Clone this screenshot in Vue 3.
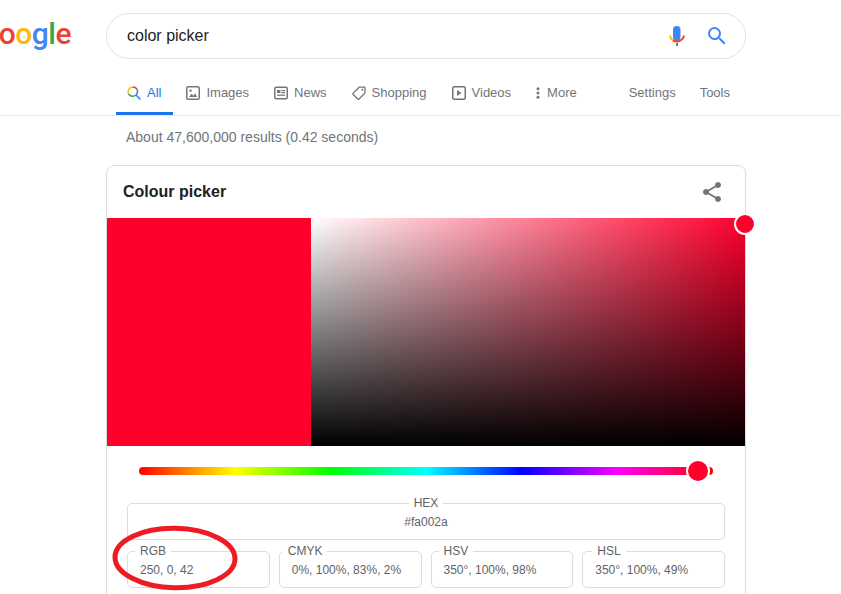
<script setup>
const tabs = [
  { name: 'All', icon: 'all', active: true },
  { name: 'Images', icon: 'images' },
  { name: 'News', icon: 'news' },
  { name: 'Shopping', icon: 'shopping' },
  { name: 'Videos', icon: 'videos' },
  { name: 'More', icon: 'more' }
]
const logo = [
  { c: 'G', color: '#4285f4' },
  { c: 'o', color: '#ea4335' },
  { c: 'o', color: '#fbbc05' },
  { c: 'g', color: '#4285f4' },
  { c: 'l', color: '#34a853' },
  { c: 'e', color: '#ea4335' }
]
const fields = [
  { label: 'RGB', value: '250, 0, 42', offset: 7 },
  { label: 'CMYK', value: '0%, 100%, 83%, 2%', offset: 3 },
  { label: 'HSV', value: '350°, 100%, 98%', offset: 7 },
  { label: 'HSL', value: '350°, 100%, 49%', offset: 9 }
]
</script>

<template>
  <div class="page">
    <header class="top">
      <div class="logo">
        <span class="logo-word">
          <span v-for="(l, i) in logo" :key="i" :style="{ color: l.color }">{{ l.c }}</span>
        </span>
      </div>
      <div class="search">
        <span class="query">color picker</span>
        <svg class="mic" width="16" height="20" viewBox="0 0 16 20">
          <rect x="4" y="0" width="7.5" height="15" rx="3.7" fill="#4285f4" />
          <path d="M1 9.5a7 6.5 0 0 0 3 4.9" fill="none" stroke="#fbbc05" stroke-width="2" />
          <path d="M4 14.4a7 6.5 0 0 0 7.6 0A7 6.5 0 0 0 15 9.5" fill="none" stroke="#ea4335" stroke-width="2" />
          <rect x="7" y="17" width="2" height="3" fill="#34a853" />
        </svg>
        <svg class="lens" width="24" height="24" viewBox="0 0 24 24">
          <path fill="#4285f4" d="M15.5 14h-.79l-.28-.27A6.471 6.471 0 0 0 16 9.5 6.5 6.5 0 1 0 9.5 16c1.61 0 3.09-.59 4.23-1.57l.27.28v.79l5 4.99L20.49 19l-4.99-5zm-6 0C7.01 14 5 11.99 5 9.5S7.01 5 9.5 5 14 7.01 14 9.5 11.99 14 9.5 14z" />
        </svg>
      </div>
    </header>

    <nav class="tabs">
      <a v-for="t in tabs" :key="t.name" class="tab" :class="{ active: t.active }">
        <svg v-if="t.icon === 'all'" width="14" height="14" viewBox="0 0 14 14" fill="none" stroke-width="1.5">
          <path d="M1.6 8A4.9 4.9 0 0 1 5.7 1" stroke="#fbbc05" />
          <path d="M5.7 1A4.9 4.9 0 0 1 10.2 3.6" stroke="#ea4335" />
          <path d="M10.2 3.6A4.9 4.9 0 0 1 9 9" stroke="#4285f4" />
          <path d="M9 9A4.9 4.9 0 0 1 1.6 8" stroke="#34a853" />
          <path d="M9 9l4.4 4.4" stroke="#4285f4" stroke-width="1.7" />
        </svg>
        <svg v-else-if="t.icon === 'images'" width="14" height="14" viewBox="0 0 14 14">
          <rect x="0.75" y="0.75" width="12.5" height="12.5" rx="1.5" fill="none" stroke="#70757a" stroke-width="1.5" />
          <circle cx="4.6" cy="4.6" r="1.2" fill="#70757a" />
          <path d="M3 11l2.6-3.2 1.7 2 2-2.6L11 11z" fill="#70757a" />
        </svg>
        <svg v-else-if="t.icon === 'news'" width="14" height="14" viewBox="0 0 14 14">
          <rect x="0.75" y="1.25" width="12.5" height="11.5" rx="1.5" fill="none" stroke="#70757a" stroke-width="1.5" />
          <rect x="3" y="4" width="3.4" height="3" fill="#70757a" />
          <rect x="7.4" y="4" width="3.6" height="1.2" fill="#70757a" />
          <rect x="7.4" y="6" width="3.6" height="1.2" fill="#70757a" />
          <rect x="3" y="8.6" width="8" height="1.2" fill="#70757a" />
        </svg>
        <svg v-else-if="t.icon === 'shopping'" width="14" height="14" viewBox="0 0 14 14">
          <path d="M1 7.4L7.2 1.2h5.3a.5.5 0 0 1 .5.5V7L6.8 13.2a.6.6 0 0 1-.8 0L1 8.2a.6.6 0 0 1 0-.8z" fill="none" stroke="#70757a" stroke-width="1.3" />
          <circle cx="10.4" cy="3.8" r="1" fill="#70757a" />
        </svg>
        <svg v-else-if="t.icon === 'videos'" width="14" height="14" viewBox="0 0 14 14">
          <rect x="0.75" y="0.75" width="12.5" height="12.5" rx="1.5" fill="none" stroke="#70757a" stroke-width="1.5" />
          <path d="M5 4l4.6 3L5 10z" fill="#70757a" />
        </svg>
        <svg v-else class="dots" width="4" height="12" viewBox="0 0 4 12">
          <circle cx="2" cy="1.8" r="1.5" fill="#70757a" />
          <circle cx="2" cy="6" r="1.5" fill="#70757a" />
          <circle cx="2" cy="10.2" r="1.5" fill="#70757a" />
        </svg>
        <span>{{ t.name }}</span>
      </a>
      <a class="tool settings">Settings</a>
      <a class="tool">Tools</a>
    </nav>

    <p class="stats">About 47,600,000 results (0.42 seconds)</p>

    <section class="card">
      <div class="card-head">
        <h2>Colour picker</h2>
        <svg width="24" height="24" viewBox="0 0 24 24">
          <path fill="#70757a" d="M18 16.08c-.76 0-1.44.3-1.96.77L8.91 12.7c.05-.23.09-.46.09-.7s-.04-.47-.09-.7l7.05-4.11c.54.5 1.25.81 2.04.81 1.66 0 3-1.34 3-3s-1.34-3-3-3-3 1.34-3 3c0 .24.04.47.09.7L8.04 9.81C7.5 9.31 6.79 9 6 9c-1.66 0-3 1.34-3 3s1.34 3 3 3c.79 0 1.5-.31 2.04-.81l7.12 4.16c-.05.21-.08.43-.08.65 0 1.61 1.31 2.92 2.92 2.92 1.61 0 2.92-1.31 2.92-2.92s-1.31-2.92-2.92-2.92z" />
        </svg>
      </div>

      <div class="picker">
        <div class="swatch"></div>
        <div class="sat">
          <span class="sat-thumb"></span>
        </div>
      </div>

      <div class="hue">
        <span class="hue-thumb"></span>
      </div>

      <div class="fields">
        <fieldset class="box hex">
          <legend>HEX</legend>
          <div>#fa002a</div>
        </fieldset>
        <div class="row">
          <fieldset v-for="f in fields" :key="f.label" class="box">
            <legend :style="{ marginLeft: f.offset + 'px' }">{{ f.label }}</legend>
            <div class="val">{{ f.value }}</div>
          </fieldset>
        </div>
      </div>

      <svg class="scribble" width="130" height="70" viewBox="0 0 130 70">
        <ellipse cx="65" cy="35" rx="60" ry="29.7" fill="none" stroke="#ed1c24" stroke-width="5" transform="rotate(1 65 35)" />
      </svg>
    </section>
  </div>
</template>

<style scoped>
.page {
  height: 594px;
  overflow: hidden;
  font-family: "Liberation Sans", Arial, sans-serif;
  color: #70757a;
}
.top {
  display: flex;
  align-items: center;
  padding-top: 13px;
}
.logo {
  width: 71px;
  margin-right: 35px;
  padding-bottom: 5px;
  display: flex;
  justify-content: flex-end;
}
.logo-word {
  font-family: Roboto, sans-serif;
  font-size: 30px;
  font-weight: 500;
  letter-spacing: -0.5px;
  line-height: 41px;
  white-space: nowrap;
}
.search {
  width: 640px;
  height: 46px;
  box-sizing: border-box;
  border: 1px solid #dfe1e5;
  border-radius: 23px;
  display: flex;
  align-items: center;
  padding: 0 8px 0 20px;
}
.query {
  flex: 1;
  font-size: 16px;
  color: #222;
}
.mic {
  margin-right: 20px;
}
.lens {
  margin-right: 8px;
}
.tabs {
  display: flex;
  height: 56px;
  padding: 0 111px 0 116px;
  border-bottom: 1px solid #ebebeb;
}
.tab {
  display: flex;
  align-items: center;
  gap: 6px;
  padding: 14px 12px 0 11px;
  margin-right: 2px;
  font-size: 13px;
  box-sizing: border-box;
  height: 56px;
  border-bottom: 3px solid transparent;
}
.tab.active {
  color: #1a73e8;
  border-bottom-color: #1a73e8;
}
.dots {
  margin-right: 1px;
}
.tool {
  display: flex;
  align-items: center;
  font-size: 13px;
  padding: 11px 0 0;
  margin-left: 24px;
}
.settings {
  margin-left: auto;
}
.stats {
  margin: 0;
  padding: 13px 0 0 126px;
  font-size: 14px;
  line-height: 16px;
}
.card {
  position: relative;
  width: 640px;
  height: 460px;
  margin: 20px 0 0 106px;
  box-sizing: border-box;
  border: 1px solid #dadce0;
  border-radius: 8px;
}
.card-head {
  display: flex;
  align-items: center;
  justify-content: space-between;
  height: 52px;
  padding: 0 21px 0 16px;
}
.card-head h2 {
  margin: 0;
  font-family: "Liberation Sans", Arial, sans-serif;
  font-size: 16px;
  font-weight: 700;
  color: #202124;
}
.picker {
  display: flex;
  height: 228px;
}
.swatch {
  width: 204px;
  background: #ff002d;
}
.sat {
  position: relative;
  flex: 1;
  background: linear-gradient(to bottom, transparent, #000), linear-gradient(to right, #fff, #ff002d);
}
.sat-thumb {
  position: absolute;
  right: -11px;
  top: -5px;
  width: 18px;
  height: 18px;
  border: 2px solid #fff;
  border-radius: 50%;
  background: #ff002d;
}
.hue {
  position: relative;
  height: 8px;
  margin: 21px 32px 0;
  border-radius: 4px;
  background: linear-gradient(to right, #f00, #ff0, #0f0, #0ff, #00f, #f0f, #f00);
}
.hue-thumb {
  position: absolute;
  right: 3px;
  top: -8px;
  width: 24px;
  height: 24px;
  border: 2px solid #fff;
  box-sizing: border-box;
  border-radius: 50%;
  background: #ff002d;
}
.fields {
  margin: 22px 20px 0;
  display: flex;
  flex-direction: column;
  gap: 5px;
}
.row {
  display: grid;
  grid-template-columns: repeat(4, 1fr);
  gap: 9px;
}
.box {
  margin: 0;
  min-width: 0;
  height: 43px;
  box-sizing: border-box;
  padding: 0;
  border: 1px solid #dadce0;
  border-radius: 5px;
  font-size: 12px;
  line-height: 14px;
  color: #5f6368;
}
.box legend {
  padding: 0 5px;
  font-size: 12px;
  line-height: 12px;
  color: #5f6368;
}
.box div {
  padding-top: 6px;
}
.box .val {
  padding-left: 12px;
}
.hex {
  text-align: center;
}
.hex legend {
  margin: 0 auto;
}
.scribble {
  position: absolute;
  left: 3px;
  top: 357px;
}
</style>
